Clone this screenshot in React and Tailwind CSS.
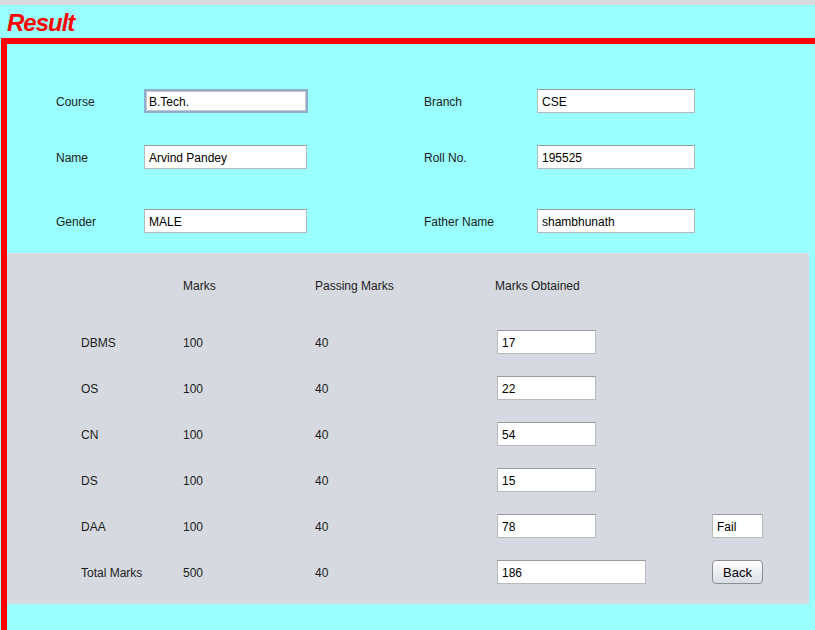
const font = { fontFamily: '"Liberation Sans", Arial, sans-serif' };

function Field({ value, w, focused }) {
  return (
    <div
      className={
        'h-[24px] bg-white flex items-center pt-[2px] text-[12px] text-black ' +
        (focused
          ? 'pl-[3px] border-2 border-[#8fadd0] shadow-[inset_0_0_0_1px_#c8c8c8]'
          : 'pl-[4px] border border-[#b9b9b9] border-t-[#9a9a9a]')
      }
      style={{ width: w }}
    >
      {value}
    </div>
  );
}

function Label({ children }) {
  return <span className="mt-[2px]">{children}</span>;
}

const subjects = [
  ['DBMS', '100', '40', '17'],
  ['OS', '100', '40', '22'],
  ['CN', '100', '40', '54'],
  ['DS', '100', '40', '15'],
  ['DAA', '100', '40', '78'],
];

const topCols = 'grid grid-cols-[88px_163px_117px_113px_158px] items-center';
const rowCols = 'grid grid-cols-[102px_132px_182px_215px_51px] items-center';

export default function App() {
  return (
    <div className="w-[815px] h-[630px] overflow-hidden bg-[#99ffff] text-[12px] text-[#1c1c1c]" style={font}>
      <div className="h-[5px] bg-[#d6d9df]" />
      <div className="h-[33px] pl-[7px] pt-[5px]">
        <h1 className="text-[24px] leading-[26px] font-bold italic text-[#ff0000] tracking-[-1px]">Result</h1>
      </div>

      <div className="ml-[1px] w-[822px] h-[600px] border-[6px] border-[#ff0000] bg-[#99ffff]">
        <div className="h-[209px] pt-[45px] pl-[49px]">
          <div className={topCols}>
            <Label>Course</Label>
            <Field value="B.Tech." w={164} focused />
            <span />
            <Label>Branch</Label>
            <Field value="CSE" w={158} />
          </div>
          <div className={topCols + ' mt-[32px]'}>
            <Label>Name</Label>
            <Field value="Arvind Pandey" w={163} />
            <span />
            <Label>Roll No.</Label>
            <Field value="195525" w={158} />
          </div>
          <div className={topCols + ' mt-[40px]'}>
            <Label>Gender</Label>
            <Field value="MALE" w={163} />
            <span />
            <Label>Father Name</Label>
            <Field value="shambhunath" w={158} />
          </div>
        </div>

        <div className="w-[802px] h-[351px] bg-[#d6d9df] pt-[20px] pl-[74px]">
          <div className="grid grid-cols-[102px_132px_180px_217px] h-[24px] items-center">
            <span />
            <Label>Marks</Label>
            <Label>Passing Marks</Label>
            <Label>Marks Obtained</Label>
          </div>
          <div className="flex flex-col gap-[22px] mt-[33px]">
            {subjects.map(([name, m, p, o]) => (
              <div key={name} className={rowCols}>
                <Label>{name}</Label>
                <Label>{m}</Label>
                <Label>{p}</Label>
                <Field value={o} w={99} />
                {name === 'DAA' ? <Field value="Fail" w={51} /> : <span />}
              </div>
            ))}
            <div className={rowCols}>
              <Label>Total Marks</Label>
              <Label>500</Label>
              <Label>40</Label>
              <Field value="186" w={149} />
              <button className="w-[51px] h-[24px] rounded-[4px] border border-[#8a8d92] bg-gradient-to-b from-[#ffffff] to-[#d9dde4] text-[13px] text-black flex items-center justify-center pt-[1px]">
                Back
              </button>
            </div>
          </div>
        </div>
      </div>
    </div>
  );
}
